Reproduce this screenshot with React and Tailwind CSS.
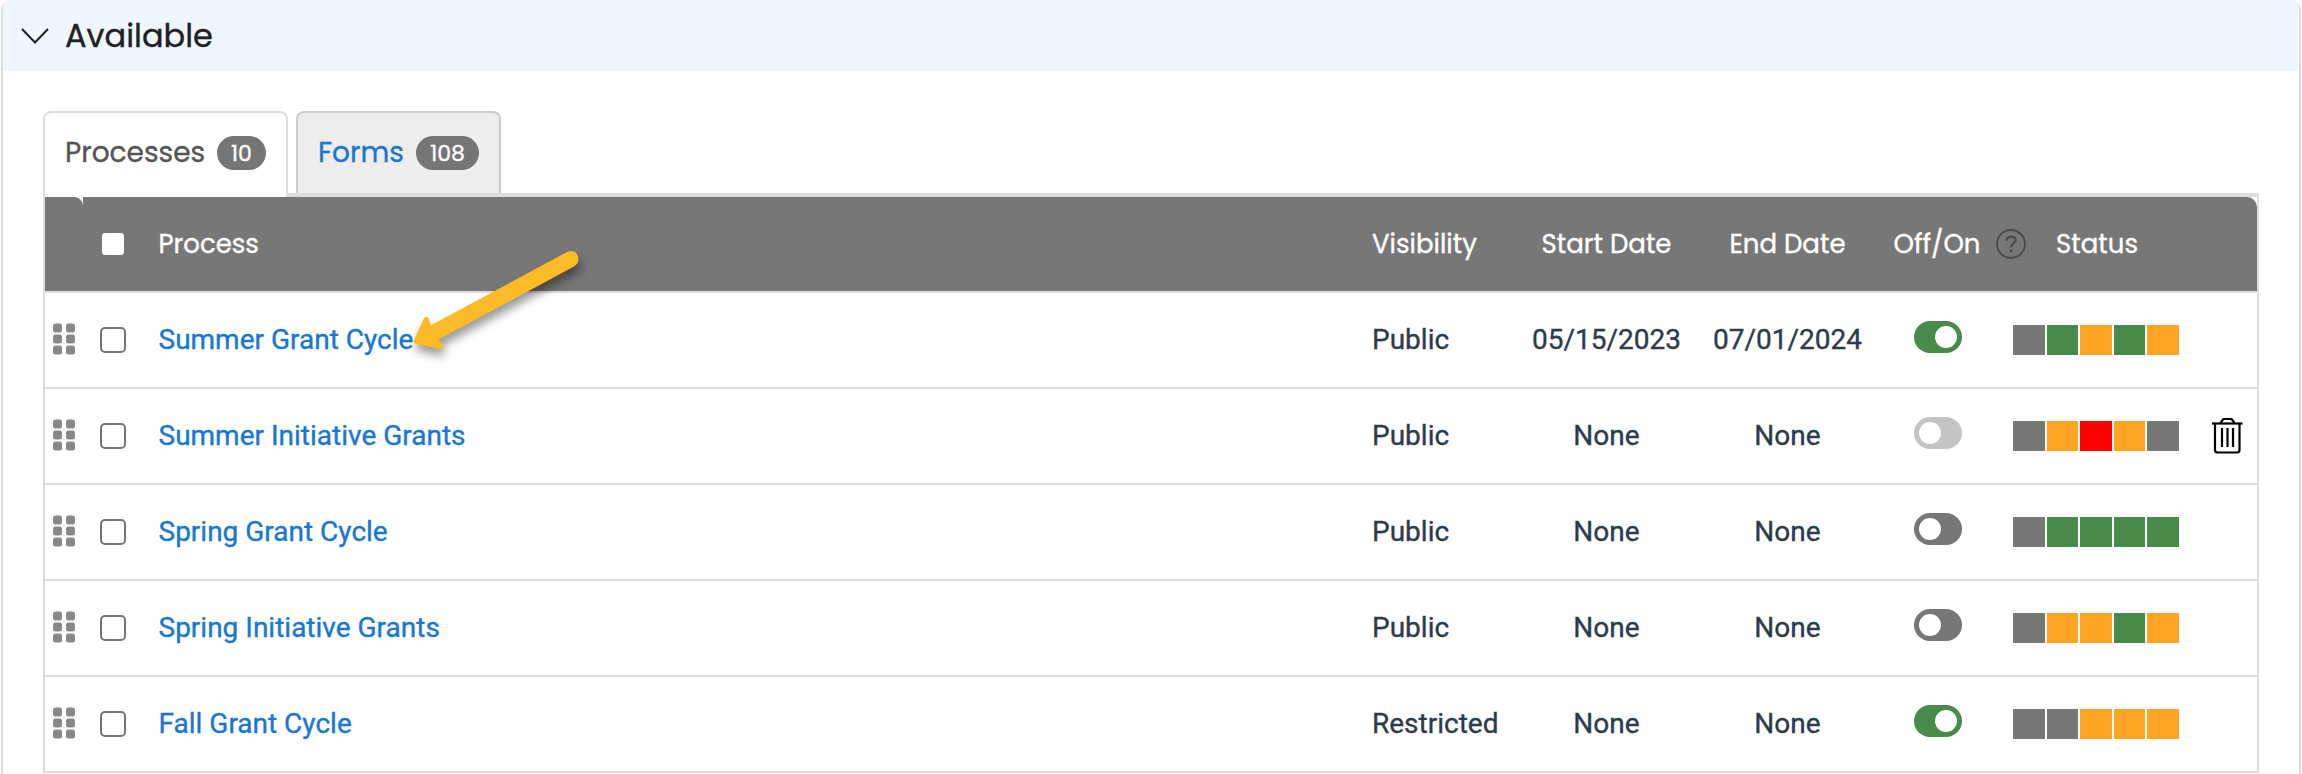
import { useState } from "react";

const poppins = "font-[Poppins,Inter,sans-serif] [font-feature-settings:'cv11'_1]";

const segmentColors = {
  idle: "bg-[#777777]",
  done: "bg-[#488b4b]",
  warn: "bg-[#ffa523]",
  error: "bg-[#ff0000]",
};

const initialProcesses = [
  { name: "Summer Grant Cycle", visibility: "Public", start: "05/15/2023", end: "07/01/2024", toggle: "on", status: ["idle", "done", "warn", "done", "warn"] },
  { name: "Summer Initiative Grants", visibility: "Public", start: "None", end: "None", toggle: "disabled", status: ["idle", "warn", "error", "warn", "idle"], deletable: true },
  { name: "Spring Grant Cycle", visibility: "Public", start: "None", end: "None", toggle: "off", status: ["idle", "done", "done", "done", "done"] },
  { name: "Spring Initiative Grants", visibility: "Public", start: "None", end: "None", toggle: "off", status: ["idle", "warn", "warn", "done", "warn"] },
  { name: "Fall Grant Cycle", visibility: "Restricted", start: "None", end: "None", toggle: "on", status: ["idle", "idle", "warn", "warn", "warn"] },
];

const gridCols =
  "grid grid-cols-[38px_75.5px_1213.5px_147.5px_174px_188px_131.5px_166px_78px] items-center";

function Checkbox() {
  return (
    <input
      type="checkbox"
      className="ml-[17px] block size-[26px] appearance-none rounded-[5px] border-2 border-[#767676] bg-white"
    />
  );
}

function DragHandle() {
  return (
    <svg className="mb-0.5 ml-2 h-8 w-[22px]" viewBox="0 0 22 32" fill="#888888">
      {[0.5, 11.5, 22.5].map((y) => (
        <g key={y}>
          <rect x="0" y={y} width="9" height="9" rx="2.5" />
          <rect x="13" y={y} width="9" height="9" rx="2.5" />
        </g>
      ))}
    </svg>
  );
}

function Toggle({ state, onClick }) {
  const track = {
    on: "bg-[#488b4b] justify-end",
    off: "bg-[#777777] justify-start",
    disabled: "bg-[#c4c4c4] justify-start",
  }[state];

  return (
    <button
      onClick={onClick}
      disabled={state === "disabled"}
      className={`mb-[6px] ml-8 flex h-8 w-12 items-center rounded-full px-[5px] ${track}`}
    >
      <span className="size-[22px] rounded-full bg-white" />
    </button>
  );
}

function TrashIcon() {
  return (
    <svg className="ml-[33px] h-9 w-[31px]" viewBox="0 0 31 36" fill="none" stroke="#000000" strokeWidth="2.2">
      <path d="M0 5.5h30.5" />
      <path d="M8.5 5 L11 1.5 Q11.5 1 12.5 1 H18.5 Q19.5 1 20 1.5 L22.5 5" />
      <path d="M3 6 V32 Q3 34.5 5.5 34.5 H25 Q27.5 34.5 27.5 32 V6" />
      <path d="M10 10v19M15.5 10v19M21 10v19" />
    </svg>
  );
}

function HelpIcon() {
  return (
    <svg className="size-[30px] shrink-0" viewBox="0 0 30 30" fill="none" stroke="#4a4a4a" strokeWidth="1.8">
      <circle cx="15" cy="15" r="14" />
      <path d="M10.6 11.8 C10.6 9 12.5 7.6 15.1 7.6 C17.8 7.6 19.6 9.1 19.6 11.3 C19.6 14.5 15.1 14.3 15.1 18.2" strokeWidth="2.2" />
      <circle cx="15.1" cy="21.8" r="1.6" fill="#4a4a4a" stroke="none" />
    </svg>
  );
}

function CountBadge({ children, className }) {
  return (
    <span
      className={`flex h-[34px] items-center justify-center rounded-[17px] bg-[#757575] text-[22px] text-white ${className}`}
    >
      {children}
    </span>
  );
}

function PointerArrow() {
  return (
    <svg
      className="pointer-events-none absolute top-[240px] left-[400px] h-[130px] w-[200px] drop-shadow-[2px_7px_5px_rgba(0,0,0,0.4)]"
      viewBox="400 240 200 130"
    >
      <path
        d="M414 340 L423.5 319 Q426 315 429 318.5 L430.5 325.5 L567 252 C573 249 578.5 253 578.5 259 Q578.5 264 574 266.5 L438.5 339.5 L443 344 Q444 349 439.5 349 L416 344 Q413 343 414 340 Z"
        fill="#fbbb27"
      />
    </svg>
  );
}

export default function App() {
  const [processes, setProcesses] = useState(initialProcesses);

  const toggleProcess = (name) => {
    setProcesses((prev) =>
      prev.map((p) =>
        p.name === name ? { ...p, toggle: p.toggle === "on" ? "off" : "on" } : p
      )
    );
  };

  return (
    <div className="relative h-[774px] overflow-hidden bg-white pr-px pl-px font-[Roboto,sans-serif] [-webkit-text-stroke:0.35px]">
      <section className="h-[800px] rounded-t-[10px] border-x-2 border-[#dddddd]">
        <div className="flex h-[71px] items-center rounded-t-[8px] bg-[#eff6ff]">
          <svg className="ml-[18px] h-4 w-7" viewBox="0 0 28 16" fill="none" stroke="#212121" strokeWidth="2">
            <path d="M1 1l13 13.5L27 1" />
          </svg>
          <h2 className={`ml-4 pt-px text-[32px] text-[#212121] ${poppins}`}>
            Available
          </h2>
        </div>

        <div className="mr-10 ml-10 pt-10">
          <div className={`flex items-start text-[28px] ${poppins}`}>
            <button className="z-10 flex h-[86px] w-[245px] items-center rounded-t-[8px] border-2 border-b-0 border-[#dddddd] bg-white pb-1 pl-5 text-[#555555]">
              <span className="w-[152px] text-left">Processes</span>
              <CountBadge className="w-[49px]">10</CountBadge>
            </button>
            <div className="flex h-[86px] grow border-b-4 border-[#dddddd] pl-2">
              <button className="flex h-[82px] w-[205px] items-center rounded-t-[8px] border-2 border-b-0 border-[#cccccc] bg-[#ededed] pl-5 text-[#1976d2]">
                <span className="w-[98px] text-left">Forms</span>
                <CountBadge className="w-[63px]">108</CountBadge>
              </button>
            </div>
          </div>

          <div className="border-x-2 border-[#dddddd]">
            <div className="bg-white">
              <div
                className={`h-24 rounded-tr-[10px] border-b-2 border-[#dddddd] bg-[#777777] text-[26px] text-white ${gridCols} ${poppins}`}
              >
                <svg className="size-[9px] self-start justify-self-end" viewBox="0 0 9 9">
                  <path d="M0 0H9V9C9 4 5 0 0 0Z" fill="#ffffff" />
                </svg>
                <Checkbox />
                <span>Process</span>
                <span>Visibility</span>
                <span className="text-center">Start Date</span>
                <span className="text-center">End Date</span>
                <span className="flex items-center pl-3 whitespace-nowrap">
                  <span className="w-[102px] shrink-0">Off/On</span>
                  <HelpIcon />
                </span>
                <span className="pl-[43px]">Status</span>
              </div>
            </div>

            {processes.map((process) => (
              <div
                key={process.name}
                className={`h-24 border-b-2 border-[#dddddd] text-[28px] text-[#2c3b4b] ${gridCols}`}
              >
                <DragHandle />
                <Checkbox />
                <a href="#" className="w-fit text-[#1976d2]">{process.name}</a>
                <span>{process.visibility}</span>
                <span className="text-center">{process.start}</span>
                <span className="text-center">{process.end}</span>
                <Toggle state={process.toggle} onClick={() => toggleProcess(process.name)} />
                <div className="flex gap-0.5">
                  {process.status.map((segment, i) => (
                    <span key={i} className={`h-[30px] w-[31.5px] ${segmentColors[segment]}`} />
                  ))}
                </div>
                {process.deletable && <TrashIcon />}
              </div>
            ))}
          </div>
        </div>
      </section>

      <PointerArrow />
    </div>
  );
}
